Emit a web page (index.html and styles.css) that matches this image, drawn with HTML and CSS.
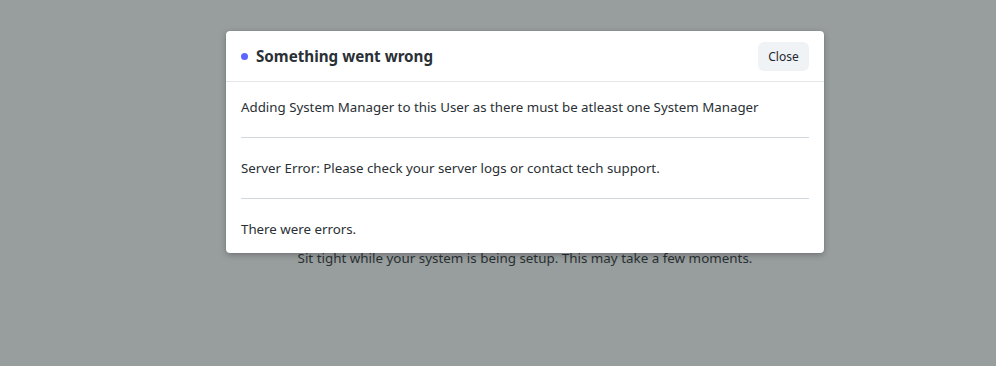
FILE: index.html
```html
<!DOCTYPE html>
<html lang="en">
<head>
    <meta charset="UTF-8">
    <meta name="viewport" content="width=device-width, initial-scale=1.0">
    <title>Setup</title>
    <link rel="stylesheet" href="styles.css">
</head>
<body>
    <div class="page">
        <p class="setup-text">Sit tight while your system is being setup. This may take a few moments.</p>
    </div>

    <div class="backdrop"></div>

    <div class="modal">
        <div class="modal-header">
            <div class="modal-title">
                <span class="indicator"></span>
                <h4>Something went wrong</h4>
            </div>
            <button class="btn-close">Close</button>
        </div>
        <div class="modal-body">
            <div class="msg">Adding System Manager to this User as there must be atleast one System Manager</div>
            <hr>
            <div class="msg">Server Error: Please check your server logs or contact tech support.</div>
            <hr>
            <div class="msg">There were errors.</div>
        </div>
    </div>
</body>
</html>
```

FILE: styles.css
```css
body {
    font-family: "Noto Sans", "Open Sans", sans-serif;
    margin: 0;
    background: #fff;
    height: 100vh;
    overflow: hidden;
    position: relative;
}
.page {
    padding-top: 248px;
    padding-left: 54px;
    text-align: center;
}
.setup-text {
    margin: 0;
    font-size: 13.4px;
    line-height: 20px;
    color: #2c3136;
}
.backdrop {
    position: absolute;
    inset: 0;
    background: rgba(40, 50, 50, 0.48);
}
.modal {
    position: absolute;
    top: 31px;
    left: 226px;
    width: 598px;
    background: #fff;
    border-radius: 4px;
    box-shadow: 0 2px 6px rgba(0, 0, 0, 0.25), 0 0 1px rgba(0, 0, 0, 0.2);
    color: #2a3035;
}
.modal-header {
    display: flex;
    align-items: center;
    justify-content: space-between;
    height: 50px;
    padding: 0 15px;
    border-bottom: 1px solid #e2e6e9;
}
.modal-title {
    display: flex;
    align-items: center;
}
.indicator {
    width: 7px;
    height: 7px;
    border-radius: 50%;
    background: #5e64ff;
    margin-right: 8px;
}
.modal-title h4 {
    margin: 0;
    font-size: 15.2px;
    font-weight: 700;
    color: #2a3035;
}
.btn-close {
    font-family: inherit;
    font-size: 12px;
    color: #1f272e;
    background: #f0f3f6;
    border: none;
    border-radius: 6px;
    width: 51px;
    height: 29px;
    padding: 0;
    cursor: pointer;
}
.modal-body {
    padding: 15px 15px 14px;
}
.msg {
    font-size: 13.3px;
    line-height: 20px;
}
.modal-body hr {
    border: none;
    border-top: 1px solid #d1d8dd;
    margin: 20px 0;
}
```
